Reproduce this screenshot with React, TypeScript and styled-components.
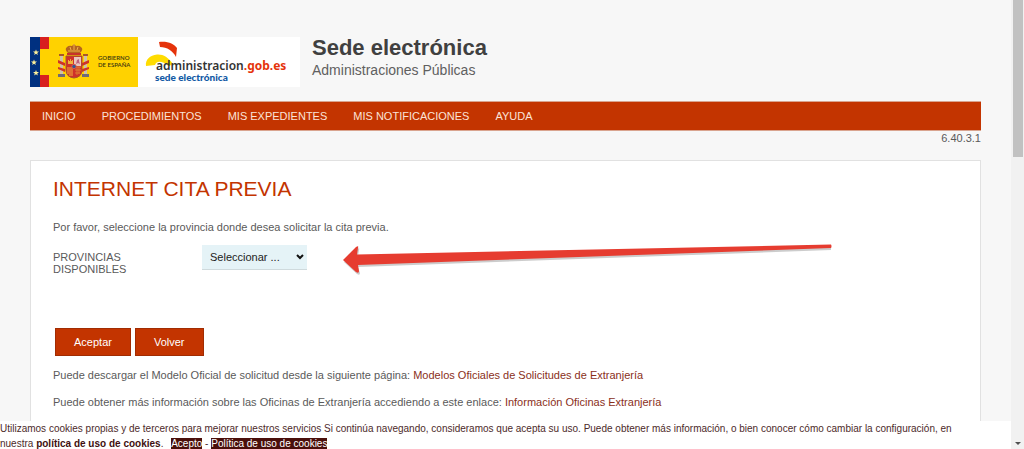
import React from "react";
import styled, { createGlobalStyle } from "styled-components";

const GlobalStyle = createGlobalStyle`
  *, *::before, *::after { box-sizing: border-box; }
  body {
    margin: 0;
    background: #f7f7f7;
    color: #5a5a5a;
    font-family: "Liberation Sans", Arial, sans-serif;
    font-size: 11px;
    line-height: 13px;
  }
  a { color: #8a2f1a; text-decoration: none; }
`;

const Window = styled.div`
  display: flex;
  height: 100vh;
  overflow: hidden;
`;

const Page = styled.div`
  position: relative;
  flex: 1;
  min-width: 0;
  overflow: hidden;
`;

const Content = styled.div`
  padding: 37px 30px 0;
`;

const ScrollTrack = styled.div`
  display: flex;
  flex-direction: column;
  justify-content: space-between;
  align-items: center;
  width: 13px;
  background: #f1f1f1;
`;

const ScrollThumb = styled.div`
  width: 10px;
  height: 35%;
  background: #c1c1c1;
`;

const ScrollArrow = styled.svg`
  display: block;
  width: 13px;
  height: 10px;
`;

const Header = styled.header`
  display: flex;
  gap: 12px;
  height: 64px;
`;

const Logo = styled.svg`
  display: block;
  width: 270px;
  height: 50px;
`;

const SiteTitle = styled.h1`
  margin: 0;
  color: #404040;
  font-size: 22px;
  line-height: 22px;
`;

const SiteSubtitle = styled.p`
  margin: 2px 0 0;
  color: #606060;
  font-size: 14px;
  line-height: 18px;
`;

const Nav = styled.nav`
  display: flex;
  gap: 26px;
  padding: 0 12px;
  background: #c33400;
  border: solid #d9a48f;
  border-width: 1px 0;
`;

const NavLink = styled.a`
  color: #fbe3d8;
  font-size: 11px;
  line-height: 28px;
`;

const Version = styled.p`
  margin: 0 0 14px;
  font-size: 11px;
  line-height: 15px;
  text-align: right;
`;

const Panel = styled.main`
  padding: 16px 22px 40px;
  background: #fff;
  border: 1px solid #e1e1e1;
`;

const PanelTitle = styled.h2`
  margin: 0 0 20px;
  color: #c33400;
  font-size: 21px;
  font-weight: 400;
  line-height: 24px;
`;

const Paragraph = styled.p`
  margin: 0 0 14px;
`;

const Field = styled.div`
  position: relative;
  display: flex;
  align-items: flex-start;
  height: 83px;
  margin-top: -3px;
`;

const FieldLabel = styled.label`
  width: 149px;
  padding: 6px 50px 0 0;
  line-height: 12px;
`;

const SelectBox = styled.span`
  position: relative;
`;

const Select = styled.select`
  display: block;
  width: 105px;
  height: 25px;
  padding: 0 8px;
  appearance: none;
  background: #e5f3f7;
  border: 0;
  border-bottom: 1px solid #cfdadd;
  border-radius: 0;
  color: #222;
  font: 11px "Liberation Sans", Arial, sans-serif;
`;

const Chevron = styled.svg`
  position: absolute;
  top: 9px;
  right: 3px;
  width: 8px;
  height: 6px;
  pointer-events: none;
`;

const PointerArrow = styled.svg`
  position: absolute;
  top: -4px;
  left: 287px;
  width: 496px;
  height: 34px;
  pointer-events: none;
`;

const Actions = styled.div`
  display: flex;
  gap: 4px;
  padding-left: 2px;
  margin-bottom: 13px;
`;

const Button = styled.button`
  height: 28px;
  padding: 0 18px;
  background: #c33400;
  border: 1px solid #a12c02;
  color: #fff;
  font: 11px "Liberation Sans", Arial, sans-serif;
`;

const CookieBar = styled.aside`
  position: absolute;
  right: 0;
  bottom: 0;
  left: 0;
  height: 28px;
  background: #fff;
  color: #4d2a2a;
  font-size: 10px;
  line-height: 15px;

  strong { color: #3f1010; }
`;

const CookieLink = styled.a`
  background: #4a0f0b;
  color: #fff;
`;

const CookieText = styled.p`
  margin: 0;
`;

const navItems = ["INICIO", "PROCEDIMIENTOS", "MIS EXPEDIENTES", "MIS NOTIFICACIONES", "AYUDA"];

function GovernmentLogo() {
  return (
    <Logo viewBox="0 0 270 50" role="img" aria-label="Gobierno de España, administracion.gob.es">
      <rect width="270" height="50" fill="#fff" />
      <rect width="108" height="50" fill="#ffd200" />
      <rect width="10" height="50" fill="#003080" />
      <rect x="10" width="9" height="12" fill="#d8201f" />
      <rect x="10" y="38" width="9" height="12" fill="#d8201f" />
      {[[6, 15.5], [4, 25.5], [6, 36]].map(([x, y]) => (
        <path
          key={y}
          transform={`translate(${x} ${y})`}
          d="M0-3 .8-.9 3-.9 1.2.5 1.9 2.6 0 1.3-1.9 2.6-1.2.5-3-.9-.8-.9Z"
          fill="#fff19a"
        />
      ))}
      <g>
        <path d="M38 16q-4-4-1-6 2-2 5-1l2-2 2 2q3-1 5 1 3 2-1 6Z" fill="#b5651f" />
        <path d="M38 14h12M40 10l1 3m7-3-1 3M44 7v6" stroke="#f0b24a" fill="none" />
        <path d="M37 16h14v2H37Z" fill="#c8322a" />
        <path d="M30 19h3v18h-3ZM54 19h3v18h-3Z" fill="#cfc2a8" />
        <path d="M29 17h5v2h-5ZM53 17h5v2h-5Z" fill="#a8572a" />
        <path d="M28 37h7v3h-7ZM52 37h7v3h-7Z" fill="#6f6a78" />
        <path d="M28 23l7 3v3l-7-3ZM59 23l-7 3v3l7-3ZM28 30l7 2v3l-7-3ZM59 30l-7 2v3l7-3Z" fill="#cf3328" />
        <path d="M36 19h16v14q0 7-8 8-8-1-8-8Z" fill="#d0302a" stroke="#a8552a" />
        <path d="M44 20h7v9h-7Z" fill="#eac6bd" />
        <path d="M38 27v-4h1v1h1v-2h1v2h1v-1h1v4Z" fill="#efb23c" />
        <path d="M46 27l1-4 2-1v2l1 3-2-1Z" fill="#c0607c" />
        <path d="M38 30v7M40 30v9M42 30v9" stroke="#efb23c" />
        <path d="M45 30h6M45 33h6M45 36h5M47 30v8M49 30v7" stroke="#e08a32" strokeWidth=".8" />
        <circle cx="44" cy="29.500" r="2.200" fill="#355592" stroke="#d95a4a" />
      </g>
      <g fill="#3b3512" fontFamily="Lato, sans-serif" fontSize="6" fontWeight="600">
        <text x="68" y="23">GOBIERNO</text>
        <text x="68" y="30">DE ESPAÑA</text>
      </g>
      <path
        d="M116 29C115 23 120 18 127 17.500 133 17 138 20 143 27L139 29C132 24 127 23 125 28Z"
        fill="#ffdc00"
      />
      <path d="M129 5C138 4 144 7 147 11L146 20C143 14 137 10 130 10Z" fill="#e5330b" />
      <g fontFamily="'Noto Sans', sans-serif" fontWeight="600">
        <text x="126" y="33" fontSize="12" fill="#333">
          administracion<tspan fill="#e5330b" fontWeight="700">.gob.es</tspan>
        </text>
        <text x="125" y="44" fontFamily="Lato, sans-serif" fontSize="10" fontWeight="900" fill="#1259a5">
          sede electrónica
        </text>
      </g>
    </Logo>
  );
}

export default function App() {
  return (
    <>
      <GlobalStyle />
      <Window>
        <Page>
          <Content>
            <Header>
              <GovernmentLogo />
              <div>
                <SiteTitle>Sede electrónica</SiteTitle>
                <SiteSubtitle>Administraciones Públicas</SiteSubtitle>
              </div>
            </Header>
            <Nav>
              {navItems.map((item) => (
                <NavLink key={item} href="#">{item}</NavLink>
              ))}
            </Nav>
            <Version>6.40.3.1</Version>
            <Panel>
              <PanelTitle>INTERNET CITA PREVIA</PanelTitle>
              <Paragraph>
                Por favor, seleccione la provincia donde desea solicitar la cita previa.
              </Paragraph>
              <Field>
                <FieldLabel htmlFor="provincia">PROVINCIAS DISPONIBLES</FieldLabel>
                <SelectBox>
                  <Select id="provincia">
                    <option>Seleccionar ...</option>
                  </Select>
                  <Chevron viewBox="0 0 8 6">
                    <path d="M1 1l3 3 3-3" fill="none" stroke="#111" strokeWidth="2" />
                  </Chevron>
                </SelectBox>
                <PointerArrow viewBox="0 0 496 34" aria-hidden="true">
                  <path
                    d="M4 21 17 8Q20 6 19 9L18 15 491 5V9L18 26 20 32Q20 35 17 33Z"
                    fill="#aaa"
                    opacity=".6"
                  />
                  <path
                    d="M3 19 16 6Q19 4 18 7L17 13.500 491 3.500Q492 5 491 7L18 24 19 30Q19 33 16 31Z"
                    fill="#e63c30"
                  />
                </PointerArrow>
              </Field>
              <Actions>
                <Button type="button">Aceptar</Button>
                <Button type="button">Volver</Button>
              </Actions>
              <Paragraph>
                Puede descargar el Modelo Oficial de solicitud desde la siguiente página:{" "}
                <a href="#">Modelos Oficiales de Solicitudes de Extranjería</a>
              </Paragraph>
              <Paragraph>
                Puede obtener más información sobre las Oficinas de Extranjería accediendo a este enlace:{" "}
                <a href="#">Información Oficinas Extranjería</a>
              </Paragraph>
            </Panel>
          </Content>
          <CookieBar>
            <CookieText>
              Utilizamos cookies propias y de terceros para mejorar nuestros servicios Si continúa
              navegando, consideramos que acepta su uso. Puede obtener más información, o bien conocer
              cómo cambiar la configuración, en
            </CookieText>
            <CookieText>
              nuestra <strong>política de uso de cookies</strong>.
              {" \u00a0 "}
              <CookieLink href="#">Acepto</CookieLink> -{" "}
              <CookieLink href="#">Política de uso de cookies</CookieLink>
            </CookieText>
          </CookieBar>
        </Page>
        <ScrollTrack aria-hidden="true">
          <ScrollThumb />
          <ScrollArrow viewBox="0 0 13 10">
            <path d="M4 3h6L7 6Z" fill="#505050" />
          </ScrollArrow>
        </ScrollTrack>
      </Window>
    </>
  );
}
